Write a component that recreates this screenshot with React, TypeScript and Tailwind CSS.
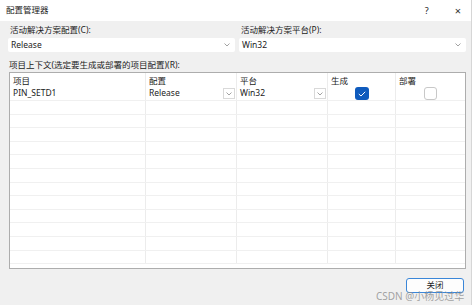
const Chevron = () => (
  <svg width="6" height="4" viewBox="0 0 6 4" className="shrink-0">
    <polyline points="0.5,0.5 3,3 5.5,0.5" fill="none" stroke="#8a8a8a" strokeWidth="0.8" />
  </svg>
);

const CellSelect = ({ value }: { value: string }) => (
  <div className="flex h-full items-center justify-between pl-[3px] pr-[1px]">
    <span>{value}</span>
    <div className="flex h-[11px] w-[12px] items-center justify-center border border-[#d9d9d9] bg-white">
      <Chevron />
    </div>
  </div>
);

const cols = 'grid grid-cols-[136px_91px_91px_68px_1fr]';
const cell = 'border-r border-[#ececec] last:border-r-0';

const ConfigManager = () => {
  const emptyRows = Array.from({ length: 12 });

  return (
    <div
      className="relative flex h-[305px] w-[474px] flex-col bg-white text-[8.5px] text-[#1b1b1b]"
      style={{ fontFamily: '"Noto Sans", "Noto Sans CJK SC", sans-serif' }}
    >
      <div className="flex w-[472px] flex-1 flex-col border-r border-[#d6d6d6]">
        {/* title bar */}
        <div className="flex h-[21px] items-center bg-white pl-[6px] pr-[10px]">
          <span>配置管理器</span>
          <span className="ml-auto mr-[26px] text-[9px]">?</span>
          <span className="text-[11px] leading-none text-[#333]">×</span>
        </div>

        <div className="flex flex-1 flex-col bg-[#f0f0f0] pl-[8px] pr-[5px]">
          {/* solution config + platform */}
          <div className="mt-[2px] grid grid-cols-[227px_1fr] gap-x-[4px]">
            <div className="flex flex-col">
              <span className="h-[14px] pl-[2px] leading-[14px]">活动解决方案配置(C):</span>
              <div className="mt-[1px] flex h-[14px] items-center justify-between rounded-[2px] bg-white pl-[3px] pr-[5px] text-[8.5px]">
                <span>Release</span>
                <Chevron />
              </div>
            </div>
            <div className="flex flex-col">
              <span className="h-[14px] pl-[2px] leading-[14px]">活动解决方案平台(P):</span>
              <div className="mt-[1px] flex h-[14px] items-center justify-between rounded-[2px] bg-white pl-[3px] pr-[5px]">
                <span>Win32</span>
                <Chevron />
              </div>
            </div>
          </div>

          <span className="mt-[6px] h-[14px] pl-[1px] leading-[14px]">项目上下文(选定要生成或部署的项目配置)(R):</span>

          {/* project grid */}
          <div className="ml-[1px] mr-[0px] h-[197px] overflow-hidden border border-[#adadad] bg-white">
            <div className={`${cols} h-[14px] items-end`}>
              <div className={`${cell} h-full pl-[3px] leading-[16px]`}>项目</div>
              <div className={`${cell} h-full pl-[3px] leading-[16px]`}>配置</div>
              <div className={`${cell} h-full pl-[3px] leading-[16px]`}>平台</div>
              <div className={`${cell} h-full pl-[3px] leading-[16px]`}>生成</div>
              <div className={`${cell} h-full pl-[3px] leading-[16px]`}>部署</div>
            </div>
            <div className={`${cols} h-[14px] border-b border-[#f0f0f0]`}>
              <div className={`${cell} flex items-center pl-[3px]`}>PIN_SETD1</div>
              <div className={cell}>
                <CellSelect value="Release" />
              </div>
              <div className={cell}>
                <CellSelect value="Win32" />
              </div>
              <div className={`${cell} flex items-center justify-center`}>
                <div className="flex h-[13px] w-[14px] items-center justify-center rounded-[3px] bg-[#0f5bbd]">
                  <svg width="8" height="6" viewBox="0 0 8 6">
                    <polyline points="0.8,3 3,5 7.2,0.8" fill="none" stroke="#ffffff" strokeWidth="1" />
                  </svg>
                </div>
              </div>
              <div className={`${cell} flex items-center justify-center`}>
                <div className="h-[13px] w-[13px] rounded-[3px] border border-[#c8c8c8] bg-white" />
              </div>
            </div>
            {emptyRows.map((_, i) => (
              <div key={i} className={`${cols} h-[13.6px] border-b border-[#f0f0f0]`}>
                <div className={cell} />
                <div className={cell} />
                <div className={cell} />
                <div className={cell} />
                <div className={cell} />
              </div>
            ))}
          </div>

          {/* footer */}
          <div className="mt-[9px] flex justify-end pr-[2px]">
            <button className="h-[15px] w-[58px] rounded-[3px] border border-[#3a86d8] bg-[#fdfdfd] text-[8.5px] leading-none">
              关闭
            </button>
          </div>
        </div>
      </div>

      {/* watermark */}
      <span className="pointer-events-none absolute left-[376px] top-[289px] text-[10px] leading-[14px] text-[#8c8c8c]/80">
        CSDN @小杨见过华
      </span>
    </div>
  );
};

export default function App() {
  return <ConfigManager />;
}
